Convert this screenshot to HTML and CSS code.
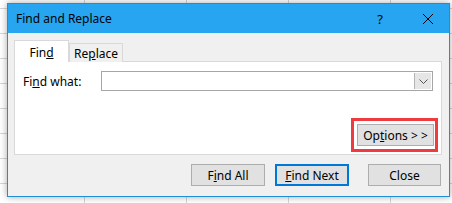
FILE: index.html
```html
<!DOCTYPE html>
<html lang="en">
<head>
    <meta charset="UTF-8">
    <meta name="viewport" content="width=device-width, initial-scale=1.0">
    <title>Find and Replace</title>
    <link rel="stylesheet" href="styles.css">
</head>
<body>
    <div class="dialog">
        <div class="titlebar">
            <span class="title">Find and Replace</span>
            <span class="help">?</span>
            <span class="close-x">
                <svg width="12" height="12" viewBox="0 0 12 12">
                    <path d="M1 1 L11 11 M11 1 L1 11" stroke="#000" stroke-width="1" fill="none"/>
                </svg>
            </span>
        </div>

        <div class="content">
            <div class="tabs">
                <div class="tab active">Fin<u>d</u></div>
                <div class="tab">Re<u>p</u>lace</div>
            </div>

            <div class="panel">
                <div class="find-row">
                    <label class="label">Fi<u>n</u>d what:</label>
                    <div class="combo">
                        <div class="combo-input"></div>
                        <div class="combo-btn">
                            <svg width="9" height="5" viewBox="0 0 9 5">
                                <path d="M0.5 0.5 L4.5 4.5 L8.5 0.5" stroke="#555" stroke-width="1" fill="none"/>
                            </svg>
                        </div>
                    </div>
                </div>

                <div class="options-row">
                    <div class="highlight-box">
                        <button class="btn options-btn">Op<u>t</u>ions &gt; &gt;</button>
                    </div>
                </div>
            </div>

            <div class="buttons">
                <button class="btn">F<u>i</u>nd All</button>
                <button class="btn default"><u>F</u>ind Next</button>
                <button class="btn close-btn">Close</button>
            </div>
        </div>
    </div>
</body>
</html>
```

FILE: styles.css
```css
* {
    margin: 0;
    padding: 0;
    box-sizing: border-box;
    font-family: 'Noto Sans', 'Open Sans', sans-serif;
}

body {
    width: 452px;
    height: 203px;
    overflow: hidden;
    background-color: #fff;
    background-image:
        repeating-linear-gradient(to bottom, transparent 0, transparent 8px, #d6d6d6 8px, #d6d6d6 9px, transparent 9px, transparent 25px),
        repeating-linear-gradient(to right, transparent 0, transparent 84px, #d6d6d6 84px, #d6d6d6 85px, transparent 85px, transparent 102px);
    padding: 3px 0 0 7px;
}

.dialog {
    width: 443px;
    height: 194px;
    background: #f0f0f0;
    border: 1px solid #1f8ed6;
    box-shadow: 0 0 7px rgba(0, 0, 0, 0.35);
    display: flex;
    flex-direction: column;
}

.titlebar {
    height: 29px;
    background: #27a5f1;
    display: flex;
    align-items: center;
    padding-left: 8px;
    font-size: 12px;
    color: #000;
}

.title {
    flex: 1;
    padding-bottom: 1px;
}

.help {
    width: 12px;
    margin-right: 36px;
    font-size: 13px;
    text-align: center;
}

.close-x {
    display: flex;
    margin-right: 15px;
}

.content {
    padding: 7px 8px 0 6px;
    font-size: 12px;
    color: #000;
}

.tabs {
    display: flex;
    align-items: flex-end;
    height: 22px;
    position: relative;
    z-index: 1;
}

.tab {
    height: 19px;
    padding: 0 8px;
    border: 1px solid #d9d9d9;
    border-bottom: none;
    background: #f0f0f0;
    display: flex;
    align-items: center;
    justify-content: center;
    width: 54px;
}

.tab.active {
    height: 22px;
    width: 55px;
    background: #fff;
    padding-top: 1px;
}

.panel {
    height: 94px;
    margin-top: -1px;
    margin-right: -1px;
    background: #fff;
    border: 1px solid #d9d9d9;
    display: flex;
    flex-direction: column;
    justify-content: space-between;
}

.find-row {
    display: flex;
    align-items: center;
    padding: 9px 0 0 8px;
}

.label {
    width: 78px;
}

.combo {
    width: 332px;
    height: 20px;
    border: 1px solid #a6a6a6;
    display: flex;
    background: #fff;
}

.combo-input {
    flex: 1;
}

.combo-btn {
    width: 17px;
    margin: 1px;
    background: #e6e6e6;
    border-left: 1px solid #b5b5b5;
    display: flex;
    align-items: center;
    justify-content: center;
}

.options-row {
    display: flex;
    justify-content: flex-end;
    padding: 0 3px 2px 0;
}

.highlight-box {
    border: 3px solid #ef3a3f;
    padding: 3px 1px 3px 3px;
}

.btn {
    height: 22px;
    width: 74px;
    background: #e1e1e1;
    border: 1px solid #adadad;
    font-size: 12px;
    color: #000;
}

.options-btn {
    width: 77px;
}

.buttons {
    display: flex;
    gap: 10px;
    justify-content: flex-end;
    padding: 9px 0 0 0;
}

.btn.default {
    border: 2px solid #0078d7;
}

.close-btn {
    width: 73px;
    margin-left: 9px;
}
```
